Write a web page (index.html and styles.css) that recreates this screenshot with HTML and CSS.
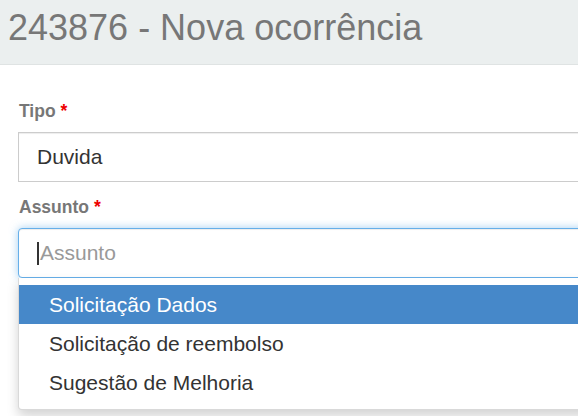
FILE: index.html
```html
<!DOCTYPE html>
<html lang="pt">
<head>
  <meta charset="UTF-8" />
  <meta name="viewport" content="width=device-width, initial-scale=1.0"/>
  <title>Nova ocorrência</title>
  <link rel="stylesheet" href="styles.css">
</head>
<body>
  <header class="page-header">
    <h1>243876 - Nova ocorrência</h1>
  </header>

  <form class="form">
    <div class="form-group">
      <label>Tipo <span class="req">*</span></label>
      <div class="form-control">Duvida</div>
    </div>

    <div class="form-group">
      <label>Assunto <span class="req">*</span></label>
      <div class="select-wrap">
        <div class="form-control focused">
          <span class="caret"></span><span class="placeholder">Assunto</span>
        </div>
        <ul class="dropdown">
          <li class="active">Solicitação Dados</li>
          <li>Solicitação de reembolso</li>
          <li>Sugestão de Melhoria</li>
        </ul>
      </div>
    </div>

    <div class="form-group">
      <div class="form-control tall"></div>
    </div>
  </form>
</body>
</html>
```

FILE: styles.css
```css
* {
  box-sizing: border-box;
}
html {
  overflow: hidden;
}
body {
  margin: 0;
  min-height: 416px;
  font-family: 'Liberation Sans', Arial, sans-serif;
  background: #fff;
  color: #333;
}

.page-header {
  background: #ebefef;
  border-bottom: 1px solid #dfe3e3;
  padding: 8px 0 16px 8px;
}

.page-header h1 {
  margin: 0;
  font-size: 36px;
  line-height: 40px;
  font-weight: normal;
  color: #777;
}

.form {
  width: 760px;
  padding: 36px 0 0 18px;
}

.form-group {
  margin-bottom: 15px;
}

.form-group label {
  display: block;
  font-size: 17.5px;
  line-height: 20px;
  font-weight: bold;
  color: #777;
  padding-left: 1px;
  margin-bottom: 11px;
}

.req {
  color: #e00;
}

.form-control {
  display: flex;
  align-items: center;
  height: 50px;
  padding: 0 18px;
  font-size: 21px;
  color: #333;
  background: #fff;
  border: 1px solid #ccc;
  box-shadow: inset 0 1px 1px rgba(0,0,0,0.075);
}

.form-control.focused {
  border-color: #66afe9;
  border-radius: 4px 0 0 4px;
  box-shadow: inset 0 1px 1px rgba(0,0,0,0.075), 0 0 8px rgba(102,175,233,0.6);
}

.caret {
  width: 2px;
  height: 23px;
  background: #333;
  margin-right: 1px;
}

.placeholder {
  color: #999;
}

.select-wrap {
  position: relative;
}

.dropdown {
  position: absolute;
  top: 100%;
  left: 0;
  right: 0;
  z-index: 5;
  margin: 0;
  padding: 7px 0 7px;
  list-style: none;
  background: #fff;
  border: 1px solid rgba(0,0,0,0.15);
  border-top: none;
  border-radius: 0 0 4px 4px;
  box-shadow: 0 6px 12px rgba(0,0,0,0.175);
}

.dropdown li {
  height: 39px;
  line-height: 39px;
  padding-left: 30px;
  font-size: 21px;
  color: #333;
}

.dropdown li.active {
  background: #4688c9;
  color: #fff;
}

.form-control.tall {
  height: 72px;
  margin-top: 7px;
  border-color: #aaa;
}
```
